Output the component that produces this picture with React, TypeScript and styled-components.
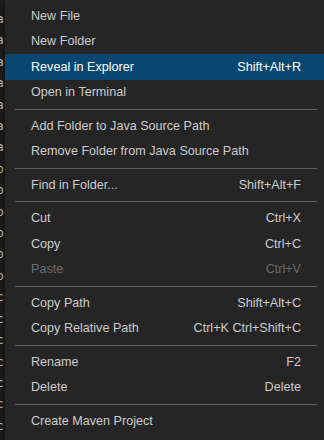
import React from 'react'
import styled, { createGlobalStyle } from 'styled-components'

const GlobalStyle = createGlobalStyle`
  html, body {
    margin: 0;
    padding: 0;
    background: #1e1e1e;
    overflow: hidden;
  }
`

const Page = styled.div`
  display: flex;
  width: 324px;
  height: 440px;
  overflow: hidden;
  font-family: 'Segoe UI', 'Liberation Sans', Arial, sans-serif;
`

const EditorStrip = styled.div`
  width: 5px;
  flex-shrink: 0;
  overflow: hidden;
  padding-top: 8px;
  font-family: 'DejaVu Sans Mono', monospace;
  font-size: 13px;
  line-height: 21.4px;
`

const CodeLine = styled.div<{ $hl?: boolean }>`
  white-space: nowrap;
  margin-left: -4px;
  color: ${(p) => (p.$hl ? '#d7ba7d' : '#c8c8c8')};
`

const Menu = styled.div`
  flex: 1;
  background: #252526;
  padding: 3px 0 4px;
  box-shadow: 0 2px 8px rgba(0, 0, 0, 0.6);
  display: flex;
  flex-direction: column;
`

const Item = styled.div<{ $active?: boolean; $disabled?: boolean }>`
  display: flex;
  align-items: center;
  justify-content: space-between;
  height: 25.5px;
  padding: 0 23px 0 26px;
  font-size: 12.6px;
  color: ${(p) => (p.$active ? '#ffffff' : p.$disabled ? '#6b6b6b' : '#cccccc')};
  background: ${(p) => (p.$active ? '#094771' : 'transparent')};
  white-space: nowrap;
`

const Shortcut = styled.span`
  padding-left: 20px;
`

const Separator = styled.div`
  height: 1px;
  margin: 3.5px 7px 3.5px 10px;
  background: #606060;
`

type Entry =
  | { label: string; key?: string; active?: boolean; disabled?: boolean }
  | 'sep'

const entries: Entry[] = [
  { label: 'New File' },
  { label: 'New Folder' },
  { label: 'Reveal in Explorer', key: 'Shift+Alt+R', active: true },
  { label: 'Open in Terminal' },
  'sep',
  { label: 'Add Folder to Java Source Path' },
  { label: 'Remove Folder from Java Source Path' },
  'sep',
  { label: 'Find in Folder...', key: 'Shift+Alt+F' },
  'sep',
  { label: 'Cut', key: 'Ctrl+X' },
  { label: 'Copy', key: 'Ctrl+C' },
  { label: 'Paste', key: 'Ctrl+V', disabled: true },
  'sep',
  { label: 'Copy Path', key: 'Shift+Alt+C' },
  { label: 'Copy Relative Path', key: 'Ctrl+K Ctrl+Shift+C' },
  'sep',
  { label: 'Rename', key: 'F2' },
  { label: 'Delete', key: 'Delete' },
  'sep',
  { label: 'Create Maven Project' },
]

const codeLines: { ch: string; hl?: boolean }[] = [
  ...Array.from({ length: 7 }, () => ({ ch: 'a' })),
  { ch: 'b', hl: true },
  ...Array.from({ length: 5 }, () => ({ ch: 'b' })),
  { ch: 'c', hl: true },
  { ch: 'c' },
  { ch: 'c' },
  { ch: 'c', hl: true },
  { ch: 'c' },
  { ch: 'c', hl: true },
  { ch: 'c' },
  { ch: 'c', hl: true },
]

export default function App() {
  return (
    <>
      <GlobalStyle />
      <Page>
        <EditorStrip>
          {codeLines.map((l, i) => (
            <CodeLine key={i} $hl={l.hl}>
              {l.ch}
            </CodeLine>
          ))}
        </EditorStrip>
        <Menu>
          {entries.map((e, i) =>
            e === 'sep' ? (
              <Separator key={i} />
            ) : (
              <Item key={i} $active={e.active} $disabled={e.disabled}>
                <span>{e.label}</span>
                {e.key && <Shortcut>{e.key}</Shortcut>}
              </Item>
            )
          )}
        </Menu>
      </Page>
    </>
  )
}
